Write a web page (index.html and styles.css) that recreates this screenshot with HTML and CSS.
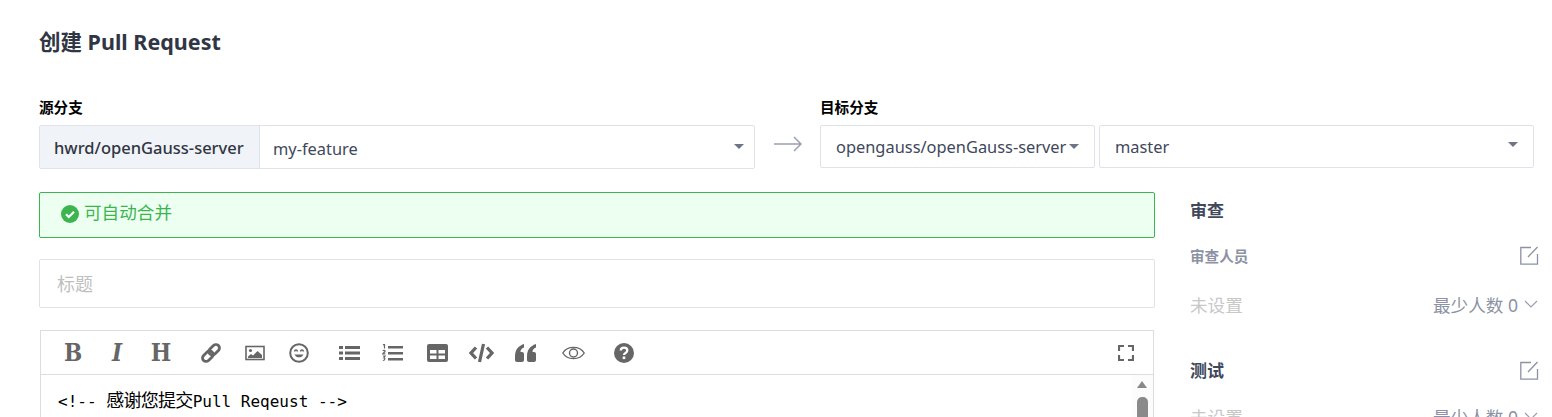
FILE: index.html
```html
<!DOCTYPE html>
<html lang="zh-CN">
<head>
    <meta charset="UTF-8">
    <title>创建 Pull Request</title>
    <link rel="stylesheet" href="styles.css">
</head>
<body>
<div class="page">
    <h1 class="pagetitle">创建 Pull Request</h1>

    <div class="branchrow">
        <div class="branchsource">
            <div class="branchlabel">源分支</div>
            <div class="branchgroup">
                <div class="branchrepo">hwrd/openGauss-server</div>
                <div class="branchselect branchgrow">my-feature<i class="caret"></i></div>
            </div>
        </div>
        <div class="brancharrow">
            <svg width="28" height="16" viewBox="0 0 28 16"><path d="M0 8H27M20 1l7 7-7 7" fill="none" stroke="#9a9fb1" stroke-width="1.500"/></svg>
        </div>
        <div class="branchtarget">
            <div class="branchlabel">目标分支</div>
            <div class="branchpair">
                <div class="branchselect targetrepo">opengauss/openGauss-server<i class="caret"></i></div>
                <div class="branchselect targetbranch">master<i class="caret"></i></div>
            </div>
        </div>
    </div>

    <div class="mainrow">
        <div class="maincol">
            <div class="mergenotice">
                <svg width="18" height="18" viewBox="0 0 18 18"><circle cx="9" cy="9" r="9" fill="#3cb550"/><path d="M5 9.300l2.800 2.700L13 6.800" fill="none" stroke="#fff" stroke-width="2.200"/></svg>
                <span class="mergetext">可自动合并</span>
            </div>
            <div class="titleinput">标题</div>

            <div class="editor">
                <div class="toolbar">
                    <div class="toolgroup">
                        <a class="tool letter">B</a>
                        <a class="tool letter italic">I</a>
                        <a class="tool letter">H</a>
                    </div>
                    <div class="toolgroup">
                        <a class="tool"><svg width="22" height="22" viewBox="0 0 22 22"><g transform="rotate(-45 11 11)" fill="none" stroke="#666" stroke-width="2.800"><rect x="0.500" y="7.500" width="12" height="7" rx="3.500"/><rect x="9.500" y="7.500" width="12" height="7" rx="3.500"/></g></svg></a>
                        <a class="tool"><svg width="20" height="16" viewBox="0 0 20 16"><rect x="1" y="1.500" width="18" height="13" fill="none" stroke="#666" stroke-width="1.600"/><circle cx="5.500" cy="5.500" r="1.600" fill="#666"/><path d="M3 13v-1.500l3-2.500 2 1.500 4.500-4.500L17 10v3z" fill="#666"/></svg></a>
                        <a class="tool"><svg width="20" height="20" viewBox="0 0 20 20"><circle cx="10" cy="10" r="8.800" fill="none" stroke="#666" stroke-width="2"/><path d="M5.500 8.500c.5-2 2.500-2 3 0M11.500 8.500c.5-2 2.500-2 3 0" fill="none" stroke="#666" stroke-width="1.600"/><path d="M5.500 11.500c2 3.800 7 3.800 9 0z" fill="#666"/></svg></a>
                    </div>
                    <div class="toolgroup">
                        <a class="tool"><svg width="21" height="16" viewBox="0 0 21 16"><path d="M0 1h4v3H0zM0 6.500h4v3H0zM0 12h4v3H0zM6 1h15v3H6zM6 6.500h15v3H6zM6 12h15v3H6z" fill="#666"/></svg></a>
                        <a class="tool toolol"><svg width="21" height="18" viewBox="0 0 21 18"><path d="M6 2h15v2.500H6zM6 8h15v2.500H6zM6 14h15v2.500H6z" fill="#666"/><path d="M1 1l1.500-.8v4.300M.8 6.800c.8-.9 2.500-.5 2.200.7-.2.8-1.500 1.200-2.200 2.300H3.300M.8 12h2.300l-1.200 1.700c1.200-.1 1.700 2.800-1 2.800" fill="none" stroke="#666" stroke-width="1.200"/></svg></a>
                        <a class="tool"><svg width="21" height="18" viewBox="0 0 21 18"><path fill-rule="evenodd" d="M2 0h17a2 2 0 0 1 2 2v14a2 2 0 0 1-2 2H2a2 2 0 0 1-2-2V2a2 2 0 0 1 2-2zM3 6v3.500h6.500V6zM11.500 6v3.500H18V6zM3 11.500V15h6.500v-3.500zM11.500 11.500V15H18v-3.500z" fill="#666"/></svg></a>
                        <a class="tool"><svg width="25" height="20" viewBox="0 0 25 20"><path d="M7 4.500L2 10l5 5.500M18 4.500l5 5.500-5 5.500M14.500 1L10.500 19" fill="none" stroke="#666" stroke-width="3.200"/></svg></a>
                        <a class="tool"><svg width="21" height="18" viewBox="0 0 21 18"><path d="M0 12C0 6 3 2 9 0v3.500C6.500 4.500 5.500 6 5.500 8H7c1.200 0 2 .8 2 2v6c0 1.200-.8 2-2 2H2c-1.200 0-2-.8-2-2zM12 12c0-6 3-10 9-12v3.500c-2.500 1-3.500 2.500-3.500 4.500H19c1.200 0 2 .8 2 2v6c0 1.200-.8 2-2 2h-5c-1.200 0-2-.8-2-2z" fill="#666"/></svg></a>
                    </div>
                    <div class="toolgroup toolview">
                        <a class="tool"><svg width="23" height="14" viewBox="0 0 23 14"><path d="M.8 7C5.500-.5 17.500-.5 22.200 7 17.500 14.500 5.500 14.500.8 7z" fill="none" stroke="#666" stroke-width="1.400"/><circle cx="11.500" cy="7" r="4" fill="none" stroke="#666" stroke-width="1.400"/></svg></a>
                    </div>
                    <div class="toolgroup toolhelp">
                        <a class="tool"><svg width="20" height="20" viewBox="0 0 20 20"><circle cx="10" cy="10" r="10" fill="#666"/><path d="M6.800 7.600c0-4 6.500-4 6.500 0 0 2.400-3.300 2.300-3.300 4.400" fill="none" stroke="#fff" stroke-width="2.300"/><rect x="8.700" y="13.500" width="2.600" height="2.600" fill="#fff"/></svg></a>
                    </div>
                    <a class="tool toolfull"><svg width="16" height="16" viewBox="0 0 16 16"><path d="M1 6V1h5M10 1h5v5M15 10v5h-5M6 15H1v-5" fill="none" stroke="#666" stroke-width="2.200"/></svg></a>
                </div>
                <div class="editorbody">
                    <div class="editortext">&lt;!-- <span class="cjktext">感谢您提交</span>Pull Reqeust --&gt;</div>
                    <div class="scrollbar">
                        <i class="scrollup"></i>
                        <i class="scrollthumb"></i>
                    </div>
                </div>
            </div>
        </div>

        <div class="sidecol">
            <div class="sidehead">审查</div>
            <div class="sidesub">
                <span>审查人员</span>
                <svg class="editicon" width="19" height="19" viewBox="0 0 19 19"><path d="M11 1.500H.8v16.700h16.700V8M8 11l9.500-10" fill="none" stroke="#8c92a4" stroke-width="1.300"/></svg>
            </div>
            <div class="sideinfo">
                <span class="unset">未设置</span>
                <span class="minpeople">最少人数 0<svg width="14" height="8" viewBox="0 0 14 8"><path d="M1 1l6 6 6-6" fill="none" stroke="#9a9fb1" stroke-width="1.200"/></svg></span>
            </div>
            <div class="sidehead sidetest">
                <span>测试</span>
                <svg class="editicon" width="19" height="19" viewBox="0 0 19 19"><path d="M11 1.500H.8v16.700h16.700V8M8 11l9.500-10" fill="none" stroke="#8c92a4" stroke-width="1.300"/></svg>
            </div>
            <div class="sideinfo sideinfo2">
                <span class="unset">未设置</span>
                <span class="minpeople">最少人数 0<svg width="14" height="8" viewBox="0 0 14 8"><path d="M1 1l6 6 6-6" fill="none" stroke="#9a9fb1" stroke-width="1.200"/></svg></span>
            </div>
        </div>
    </div>
</div>
</body>
</html>
```

FILE: styles.css
```css
html, body{
    margin: 0;
    height: 100%;
    overflow: hidden;
    background: #fff;
}

.page{
    padding: 0 14px 0 39px;
    font-family: "Noto Sans", "Noto Sans CJK SC", sans-serif;
    font-size: 16px;
    color: #40485b;
}

.pagetitle{
    margin: 0;
    padding-top: 28px;
    height: 28px;
    line-height: 28px;
    font-size: 21.500px;
    font-weight: 700;
    color: #303643;
}

.branchrow{
    display: flex;
    margin-top: 41px;
}

.branchsource{
    width: 716px;
}

.branchlabel{
    height: 20px;
    line-height: 20px;
    margin-bottom: 8px;
    font-size: 14.600px;
    font-weight: 700;
    color: #000;
}

.branchgroup{
    display: flex;
    height: 44px;
    border: 1px solid #dfe3e9;
    border-radius: 2px;
    box-sizing: border-box;
}

.branchrepo{
    width: 220px;
    padding: 1px 0 0 14px;
    box-sizing: border-box;
    line-height: 42px;
    font-size: 16.500px;
    font-weight: 500;
    color: #303643;
    background: #f0f3f7;
    border-right: 1px solid #dfe3e9;
}

.branchselect{
    position: relative;
    box-sizing: border-box;
    padding: 1px 0 0 13px;
    font-size: 16.400px;
    line-height: 44px;
    color: #40485b;
    white-space: nowrap;
}

.branchgrow{
    flex: 1;
}

.brancharrow{
    width: 65px;
    padding: 26px 0 0 19px;
    box-sizing: border-box;
    align-self: center;
}

.branchtarget{
    flex: 1;
}

.branchpair{
    display: flex;
    gap: 4px;
    height: 43px;
}

.branchpair .branchselect{
    border: 1px solid #dfe3e9;
    border-radius: 2px;
    line-height: 41px;
    padding: 0 0 0 15px;
}

.targetrepo{
    width: 275px;
}

.targetbranch{
    width: 435px;
}

.caret{
    position: absolute;
    right: 10px;
    top: 18px;
    width: 0;
    height: 0;
    border-left: 5px solid transparent;
    border-right: 5px solid transparent;
    border-top: 5px solid #6e7485;
}

.targetrepo .caret{
    right: 15px;
    top: 18px;
}

.targetbranch .caret{
    right: 15px;
    top: 16px;
}

.mainrow{
    display: flex;
    gap: 35px;
    margin-top: 23px;
}

.maincol{
    width: 1116px;
    flex: none;
}

.mergenotice{
    display: flex;
    align-items: center;
    gap: 5px;
    height: 46px;
    box-sizing: border-box;
    padding: 0 0 3px 21px;
    background: #edfff1;
    border: 1px solid #3cb550;
    border-radius: 2px;
    color: #3cb550;
}

.mergetext{
    margin-bottom: 4px;
    font-size: 17.600px;
}

.titleinput{
    margin-top: 21px;
    height: 49px;
    box-sizing: border-box;
    padding: 1px 0 0 17px;
    border: 1px solid #dfe3e9;
    border-radius: 2px;
    font-size: 18px;
    line-height: 47px;
    color: #bfbfbf;
}

.editor{
    margin: 22px 1px 0;
    border: 1px solid #ddd;
    border-bottom: 0;
}

.toolbar{
    display: flex;
    align-items: center;
    height: 43px;
    padding-left: 10px;
    border-bottom: 1px solid #ddd;
    gap: 6px;
}

.toolgroup{
    display: flex;
}

.tool{
    display: flex;
    width: 44px;
    height: 43px;
    align-items: center;
    justify-content: center;
}

.toolol{
    margin-left: -1px;
    margin-right: 1px;
}

.letter{
    font-family: "DejaVu Serif", serif;
    font-stretch: condensed;
    font-weight: 700;
    font-size: 24px;
    color: #666;
}

.italic{
    font-style: italic;
}

.toolview{
    margin-left: -2px;
}

.toolhelp{
    margin-left: 1px;
}

.toolfull{
    margin-left: auto;
    margin-right: 5px;
}

.editorbody{
    display: flex;
    height: 60px;
}

.editortext{
    flex: 1;
    padding: 14px 0 0 17px;
    font-family: "DejaVu Sans Mono", "Noto Sans CJK SC", monospace;
    font-size: 16px;
    line-height: 24px;
    color: #000;
    white-space: pre;
}

.cjktext{
    font-size: 18px;
    letter-spacing: -0.700px;
}

.scrollbar{
    position: relative;
    width: 21px;
    background: #fcfcfc;
}

.scrollup{
    position: absolute;
    left: 5px;
    top: 6px;
    width: 0;
    height: 0;
    border-left: 5px solid transparent;
    border-right: 5px solid transparent;
    border-bottom: 7px solid #888;
}

.scrollthumb{
    position: absolute;
    left: 5px;
    top: 22px;
    width: 11px;
    height: 40px;
    border-radius: 5px 5px 0 0;
    background: #8a8a8a;
}

.sidecol{
    flex: 1;
    min-width: 0;
}

.sidehead{
    display: flex;
    justify-content: space-between;
    align-items: center;
    height: 34px;
    font-size: 17px;
    font-weight: 700;
    color: #40485b;
}

.sidesub{
    display: flex;
    justify-content: space-between;
    align-items: center;
    height: 24px;
    margin-top: 17px;
    font-size: 14.600px;
    font-weight: 700;
    color: #8c92a4;
}

.editicon{
    margin-right: -1px;
}

.sidetest .editicon{
    margin-top: 2px;
}

.sideinfo{
    display: flex;
    justify-content: space-between;
    align-items: center;
    height: 28px;
    margin-top: 23px;
}

.unset{
    color: #c8c8c8;
    font-size: 17.600px;
}

.minpeople{
    display: flex;
    align-items: center;
    gap: 6px;
    font-size: 17.600px;
    color: #8c92a4;
}

.sidetest{
    margin-top: 34px;
}

.sideinfo2{
    margin-top: 16px;
}
```
